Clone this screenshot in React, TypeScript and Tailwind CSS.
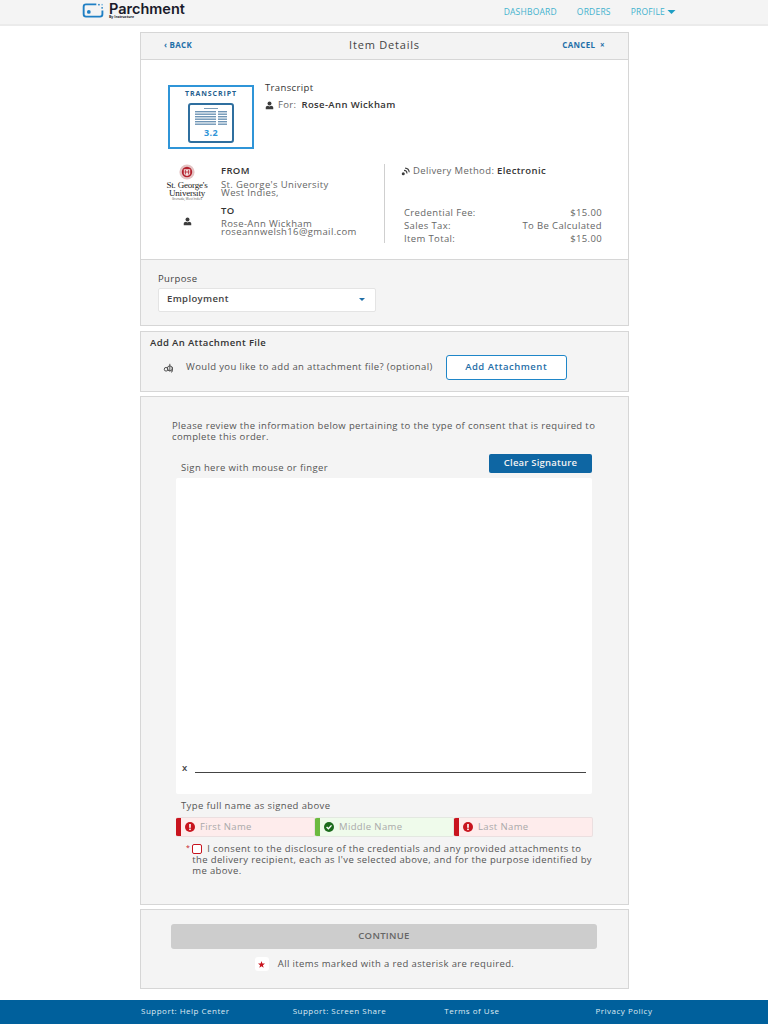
import React from "react";

const Person = ({ className }: { className?: string }) => (
  <svg viewBox="0 0 12 12" className={className} fill="#3d3d3d">
    <circle cx="6" cy="3.4" r="2.6" />
    <path d="M1 11V8.6C1 7.2 2.4 6.6 4 6.4L6 7.4L8 6.4C9.6 6.6 11 7.2 11 8.6V11Z" />
  </svg>
);

const Caret = ({ className }: { className?: string }) => (
  <svg viewBox="0 0 8 4" className={className} fill="currentColor">
    <path d="M0 0H8L4 4Z" />
  </svg>
);

const Logo = () => (
  <svg viewBox="0 0 24 16" className="w-[23px] h-[15px]" fill="none">
    <path d="M15 1.5H4Q1.5 1.5 1.5 4V12Q1.5 14.5 4 14.5H19Q21.5 14.5 21.5 12V8" stroke="#1f7fc4" strokeWidth="2" />
    <circle cx="7" cy="9.5" r="2" fill="#1f7fc4" />
    <rect x="17" y="1" width="1.6" height="1.6" fill="#1f7fc4" />
    <rect x="20.4" y="1" width="1.6" height="1.6" fill="#7fb8df" />
    <rect x="20.4" y="4.4" width="1.6" height="1.6" fill="#1f7fc4" />
  </svg>
);

const TranscriptThumb = () => (
  <div className="w-[86px] h-[64px] border-2 border-[#2f95d8] bg-white flex flex-col items-center pt-[3px] shrink-0">
    <span className="text-[7px] leading-[8px] font-bold tracking-[0.9px] text-[#1f5f8f]">TRANSCRIPT</span>
    <div className="mt-[5px] w-[46px] h-[40px] rounded-[3px] border-2 border-[#2f6f9f] flex flex-col items-center pt-[3px]">
      <svg viewBox="0 0 36 20" className="w-[36px] h-[20px]">
        <rect x="11" y="0" width="14" height="1" fill="#7d9db8" />
        {[3, 5.5, 8, 10.5, 13, 15.5].map((y) => (
          <g key={y} fill="#6f95b5">
            <rect x="2" y={y} width="21" height="1.4" />
            <rect x="25" y={y} width="9" height="1.4" />
          </g>
        ))}
      </svg>
      <span className="text-[9px] leading-[10px] font-bold text-[#2f95d8]">3.2</span>
    </div>
  </div>
);

const Crest = () => (
  <div className="w-[44px] h-[34px] flex flex-col items-center shrink-0 -mt-[1px]">
    <svg viewBox="0 0 20 20" className="w-[16px] h-[16px] shrink-0">
      <circle cx="10" cy="10" r="9.5" fill="#e4c4c4" />
      <circle cx="10" cy="10" r="6.5" fill="#b3202c" />
      <path d="M6 6.5H14V12Q14 14 10 15Q6 14 6 12Z" fill="#f3dede" />
      <path d="M8 7.5V13M12 7.5V13M7 10H13" stroke="#b3202c" strokeWidth="1" />
    </svg>
    <span className="font-['Liberation_Serif',serif] text-[9px] leading-[8px] tracking-[-0.2px] text-[#222] mt-[1px] whitespace-nowrap">St. George's</span>
    <span className="font-['Liberation_Serif',serif] text-[9px] leading-[8px] tracking-[-0.2px] text-[#222] whitespace-nowrap">University</span>
    <span className="text-[3px] leading-[4px] tracking-normal text-[#555] whitespace-nowrap">Grenada, West Indies</span>
  </div>
);

const Signal = ({ className }: { className?: string }) => (
  <svg viewBox="0 0 12 12" className={className} fill="none" stroke="#3d3d3d" strokeWidth="1.4">
    <circle cx="3" cy="9" r="2" fill="#3d3d3d" stroke="none" />
    <path d="M4 4.5A4 4 0 0 1 8 8.5M5.5 1.5A6 6 0 0 1 11 7" />
  </svg>
);

const Clip = () => (
  <svg viewBox="0 0 14 12" className="w-[12px] h-[10px]" fill="none" stroke="#444" strokeWidth="1.1">
    <circle cx="3.5" cy="7.5" r="2.2" />
    <circle cx="8" cy="6.5" r="3" />
    <path d="M8 1V10M11 5V9.5Q11 11 9.5 11" />
  </svg>
);

const Alert = () => (
  <svg viewBox="0 0 10 10" className="w-[10px] h-[10px] shrink-0">
    <circle cx="5" cy="5" r="5" fill="#c8141e" />
    <rect x="4.2" y="2" width="1.6" height="3.8" fill="#fff" />
    <rect x="4.2" y="6.6" width="1.6" height="1.5" fill="#fff" />
  </svg>
);

const Check = () => (
  <svg viewBox="0 0 10 10" className="w-[10px] h-[10px] shrink-0">
    <circle cx="5" cy="5" r="5" fill="#1c6b1c" />
    <path d="M2.6 5L4.4 6.8L7.5 3.4" stroke="#fff" strokeWidth="1.4" fill="none" />
  </svg>
);

function NameField({ label, ok }: { label: string; ok?: boolean }) {
  return (
    <div className={`w-[139px] h-[20px] shrink-0 flex rounded-[2px] overflow-hidden border-y border-r ${ok ? "border-[#e3e8e1] bg-[#effbeb]" : "border-[#ebdfe0] bg-[#feecec]"}`}>
      <div className={`w-[5px] shrink-0 ${ok ? "bg-[#6cba3f]" : "bg-[#c8141e]"}`} />
      <div className="flex items-center pl-[4px] gap-[5px]">
        {ok ? <Check /> : <Alert />}
        <span className="text-[9.5px] text-[#a9a9a9]">{label}</span>
      </div>
    </div>
  );
}

const FeeRow = ({ label, value }: { label: string; value: string }) => (
  <div className="flex justify-between h-[13px] leading-[13px]">
    <span>{label}</span>
    <span>{value}</span>
  </div>
);

export default function App() {
  return (
    <div className="min-h-[1024px] flex flex-col bg-white font-['Open_Sans',sans-serif] text-[#444] tracking-[0.37px]">
      <header className="h-[26px] bg-[#f4f4f4] border-b-2 border-[#ebebeb] flex items-center justify-between pl-[82px] pr-[92px]">
        <div className="flex items-center gap-[4px] pb-[3px]">
          <Logo />
          <div className="flex flex-col">
            <span className="text-[14.5px] leading-[13px] tracking-normal font-semibold text-[#1a1a2a] font-['Inter',sans-serif]">Parchment</span>
            <span className="text-[3.5px] leading-[4px] tracking-normal font-bold text-[#1a1a2a]">By Instructure</span>
          </div>
        </div>
        <nav className="flex items-center gap-[20px] text-[8.5px] text-[#42b2ce] tracking-[0.2px]">
          <span>DASHBOARD</span>
          <span>ORDERS</span>
          <span className="flex items-center gap-[2px]">
            PROFILE
            <Caret className="w-[9px] h-[4px] text-[#1e9ec4]" />
          </span>
        </nav>
      </header>

      <main className="w-[489px] ml-[140px] mt-[6px] flex flex-col gap-[4px]">
        <section className="border border-[#d6d6d6]">
          <div className="h-[27px] bg-[#f3f3f3] border-b border-[#d6d6d6] grid grid-cols-3 items-center px-[23px] pb-[2px]">
            <span className="text-[8px] font-bold text-[#1f6fa8] tracking-[0.3px]">‹ BACK</span>
            <span className="text-[11px] text-[#444] tracking-[0.8px] text-center whitespace-nowrap">Item Details</span>
            <span className="text-[8px] font-bold text-[#1f6fa8] tracking-[0.3px] text-right">CANCEL &nbsp;×</span>
          </div>

          <div className="bg-white pt-[25px] pl-[27px] pr-[26px] h-[199px]">
            <div className="flex gap-[11px]">
              <TranscriptThumb />
              <div className="text-[9.5px] -mt-[4px]">
                <div className="leading-[14px] text-[#333]">Transcript</div>
                <div className="flex items-center mt-[3px] leading-[14px]">
                  <Person className="w-[9px] h-[9px] mr-[4px]" />
                  <span className="text-[#666]">For:</span>
                  <span className="ml-[5px] font-semibold text-[#333]">Rose-Ann Wickham</span>
                </div>
              </div>
            </div>

            <div className="flex mt-[15px]">
              <div className="w-[219px] -ml-[3px] pt-[1px] shrink-0">
                <div className="flex gap-[12px]">
                  <Crest />
                  <div className="text-[9.5px]">
                    <div className="font-semibold leading-[12px] text-[#333]">FROM</div>
                    <div className="mt-[4px] leading-[7.5px] text-[#666]">
                      St. George's University
                      <br />
                      West Indies,
                    </div>
                  </div>
                </div>
                <div className="flex gap-[12px] mt-[7px]">
                  <div className="w-[44px] flex justify-center pt-[12px] shrink-0">
                    <Person className="w-[9px] h-[9px]" />
                  </div>
                  <div className="text-[9.5px]">
                    <div className="font-semibold leading-[12px] text-[#333]">TO</div>
                    <div className="mt-[3px] leading-[7.5px] text-[#666]">
                      Rose-Ann Wickham
                      <br />
                      roseannwelsh16@gmail.com
                    </div>
                  </div>
                </div>
              </div>

              <div className="flex-1 border-l border-[#cfcfcf] h-[79px] pl-[16px] pt-[1px] text-[9.5px] text-[#666]">
                <div className="flex items-center h-[12px]">
                  <Signal className="w-[9px] h-[9px] mr-[3px]" />
                  <span>Delivery Method:&nbsp;</span>
                  <b className="font-semibold text-[#333]">Electronic</b>
                </div>
                <div className="mt-[29px] pl-[3px]">
                  <FeeRow label="Credential Fee:" value="$15.00" />
                  <FeeRow label="Sales Tax:" value="To Be Calculated" />
                  <FeeRow label="Item Total:" value="$15.00" />
                </div>
              </div>
            </div>
          </div>

          <div className="bg-[#f4f4f4] border-t border-[#d6d6d6] h-[66px] pl-[17px] pt-[13px]">
            <div className="text-[9.5px] leading-[12px] text-[#444]">Purpose</div>
            <div className="mt-[3px] w-[218px] h-[24px] bg-white border border-[#e4e4e4] rounded-[2px] flex items-center justify-between pl-[8px] pr-[10px] pb-[1px]">
              <span className="text-[9.5px] font-semibold text-[#444]">Employment</span>
              <Caret className="w-[6px] h-[3px] text-[#1f6fa8]" />
            </div>
          </div>
        </section>

        <section className="mt-[1px] h-[61px] bg-[#f4f4f4] border border-[#d6d6d6] pl-[9px] pt-[5px]">
          <div className="text-[9.5px] leading-[12px] font-semibold text-[#333]">Add An Attachment File</div>
          <div className="flex items-center mt-[6px] pl-[13px]">
            <Clip />
            <span className="ml-[11px] text-[9.5px] text-[#555]">Would you like to add an attachment file? (optional)</span>
            <button className="ml-[13px] w-[121px] h-[25px] bg-white border-[1.5px] border-[#1f86c8] rounded-[3px] text-[9.5px] font-semibold tracking-[0.5px] text-[#1f6fa8]">
              Add Attachment
            </button>
          </div>
        </section>

        <section className="h-[509px] bg-[#f4f4f4] border border-[#d6d6d6] pl-[31px] pr-[36px] pt-[23px]">
          <p className="text-[9.5px] leading-[11px] text-[#555] -mr-[6px]">
            Please review the information below pertaining to the type of consent that is required to complete this order.
          </p>
          <div className="flex items-end justify-between mt-[12px] pl-[9px]">
            <span className="text-[9.5px] leading-[14px] text-[#555] mb-[3px]">Sign here with mouse or finger</span>
            <button className="w-[103px] h-[19px] bg-[#0e66a3] rounded-[2px] text-[9.5px] font-semibold tracking-[0.2px] text-[#f2f2f2] mb-[5px]">
              Clear Signature
            </button>
          </div>
          <div className="ml-[4px] h-[316px] bg-white rounded-[2px] flex items-end px-[6px] pb-[21px]">
            <span className="text-[9.5px] leading-[10px] font-semibold text-[#444] mr-[7px]">x</span>
            <div className="flex-1 border-b border-[#444]" />
          </div>
          <div className="mt-[6px] pl-[9px] text-[9.5px] leading-[12px] text-[#555]">Type full name as signed above</div>
          <div className="flex ml-[4px] mt-[5px]">
            <NameField label="First Name" />
            <NameField label="Middle Name" ok />
            <NameField label="Last Name" />
          </div>
          <div className="flex mt-[6px] pl-[14px] text-[9.5px] leading-[11px] text-[#555]">
            <span className="w-[5px] text-[#c8141e] text-[7px] leading-[10px]">*</span>
            <p className="pl-[2px] w-[404px] shrink-0">
              <span className="inline-block align-[-2px] w-[10px] h-[10px] mr-[5px] bg-white border border-[#c8141e] rounded-[2px]" />
              I consent to the disclosure of the credentials and any provided attachments to the delivery recipient, each as I've selected above, and for the purpose identified by me above.
            </p>
          </div>
        </section>

        <section className="h-[80px] bg-[#f4f4f4] border border-[#d6d6d6] pt-[14px] flex flex-col items-center">
          <div className="w-[426px] h-[25px] mr-[1px] bg-[#cdcdcd] rounded-[3px] flex items-center justify-center text-[9.5px] font-semibold tracking-[0.3px] text-[#666]">
            CONTINUE
          </div>
          <div className="flex items-center mt-[8px] gap-[9px]">
            <span className="w-[14px] h-[14px] bg-white rounded-[3px] flex items-center justify-center">
              <svg viewBox="0 0 10 10" className="w-[7px] h-[7px]" fill="#c8141e">
                <path d="M5 0L6.2 3.6H10L7 5.9L8.1 9.6L5 7.4L1.9 9.6L3 5.9L0 3.6H3.8Z" />
              </svg>
            </span>
            <span className="text-[9.5px] text-[#555]">All items marked with a red asterisk are required.</span>
          </div>
        </section>
      </main>

      <footer className="mt-[11px] h-[24px] bg-[#00609c] flex items-center pl-[141px] pb-[3px] text-[8px] tracking-[0.5px] text-[#dfeaf2]">
        <span>Support: Help Center</span>
        <span className="ml-[63px]">Support: Screen Share</span>
        <span className="ml-[58px]">Terms of Use</span>
        <span className="ml-[96px]">Privacy Policy</span>
      </footer>
    </div>
  );
}
